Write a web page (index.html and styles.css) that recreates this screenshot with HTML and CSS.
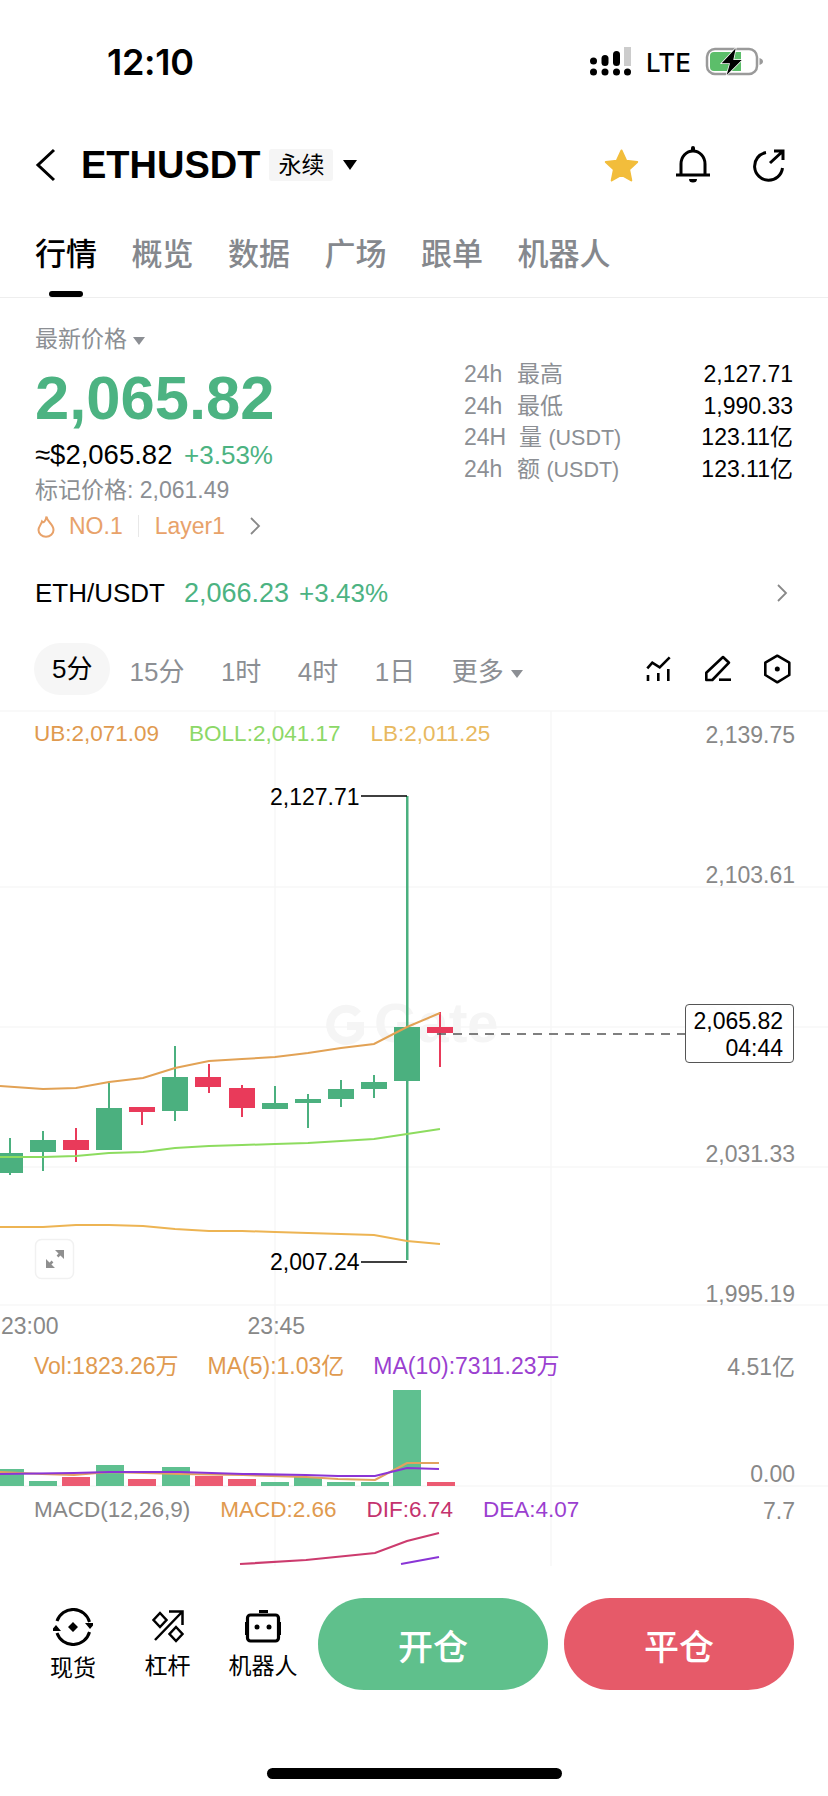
FILE: index.html
```html
<!DOCTYPE html>
<html lang="zh-CN">
<head>
  <meta charset="UTF-8" />
  <meta name="viewport" content="width=device-width, initial-scale=1.0"/>
  <title>ETHUSDT</title>
  <link rel="stylesheet" href="styles.css">
</head>
<body>
  <div class="screen">

    <div class="status">
      <span class="time">12:10</span>
      <div class="status-right">
        <svg class="signal" width="42" height="32" viewBox="590 46 42 32">
          <g fill="#000">
            <circle cx="593.5" cy="72" r="3.5"/><circle cx="605" cy="72" r="3.5"/><circle cx="616.5" cy="72" r="3.5"/><circle cx="627.5" cy="72" r="3.5"/>
            <circle cx="593.5" cy="61" r="3.5"/>
            <rect x="601.5" y="55" width="7" height="11" rx="3.5"/>
            <rect x="613" y="51" width="7" height="15" rx="3.5"/>
          </g>
          <rect x="624" y="47" width="7" height="19" fill="#ccc"/>
        </svg>
        <span class="lte">LTE</span>
        <svg class="battery" width="60" height="32" viewBox="704 46 60 32">
          <rect x="707" y="49" width="50" height="25" rx="8" fill="none" stroke="#9a9a9a" stroke-width="2.5"/>
          <path d="M710 56a4 4 0 0 1 4-4h27v19h-27a4 4 0 0 1-4-4z" fill="#5cbe6a"/>
          <path d="M759.5 58c2.500 1 3.500 2 3.500 3.500s-1 2.500-3.500 3.500z" fill="#9a9a9a"/>
          <path d="M735.700 48.300L721.700 63.300H730L726.700 75L741.700 60H733.300z" fill="#000" stroke="#fff" stroke-width="1.500" paint-order="stroke"/>
        </svg>
      </div>
    </div>

    <div class="nav">
      <svg width="22" height="34" viewBox="35 148 22 34"><path d="M54 150L38 165L54 180" fill="none" stroke="#000" stroke-width="3"/></svg>
      <span class="symbol">ETHUSDT</span>
      <span class="badge">永续</span>
      <span class="caret"></span>
      <div class="nav-icons">
        <svg width="40" height="36" viewBox="602 147 40 36"><path d="M621.500 150.500l4.700 10.200 11 1.300-8.100 7.500 2.200 11-9.800-5.500-9.800 5.500 2.200-11-8.100-7.500 11-1.300z" fill="#f2bd3b" stroke="#f2bd3b" stroke-width="2" stroke-linejoin="round"/></svg>
        <svg width="36" height="38" viewBox="675 146 36 38">
          <path d="M681 175V164a12 13 0 0 1 24 0V175M676 175H710" fill="none" stroke="#000" stroke-width="3"/>
          <path d="M689 179h8a4 3.500 0 0 1-8 0zM691 148a2 2 0 0 1 4 0v2h-4z" fill="#000"/>
        </svg>
        <svg class="share" width="36" height="34" viewBox="751 149 36 34">
          <path d="M766 153.500A14 14 0 1 0 782.500 169M770 164L782.500 152.500M774 152H783V161" fill="none" stroke="#000" stroke-width="3"/>
        </svg>
      </div>
    </div>

    <div class="tabs">
      <span class="tab active">行情</span>
      <span class="tab">概览</span>
      <span class="tab">数据</span>
      <span class="tab">广场</span>
      <span class="tab">跟单</span>
      <span class="tab">机器人</span>
    </div>

    <div class="info">
      <div class="info-left">
        <div class="muted latest">最新价格 <span class="caret small"></span></div>
        <div class="price">2,065.82</div>
        <div class="approx">≈$2,065.82 <span class="up">+3.53%</span></div>
        <div class="muted mark">标记价格: 2,061.49</div>
        <div class="tags">
          <svg width="18" height="23" viewBox="37 514 18 23"><path d="M46.500 515.500C47 521 53.500 523 53.500 529A7.500 6.800 0 0 1 38.500 529C38.500 525.500 41 524 42 520.500C43.500 522 45.500 521 46.500 515.500Z" fill="none" stroke="#e8a26a" stroke-width="2"/></svg>
          <span class="no1">NO.1</span>
          <span class="tag-sep"></span>
          <span>Layer1</span>
          <svg class="tag-arrow" width="12" height="20" viewBox="0 0 12 20"><path d="M2 2L10 10L2 18" fill="none" stroke="#888" stroke-width="1.800"/></svg>
        </div>
      </div>
      <div class="stats">
        <div class="stat"><span class="k">24h</span><span>最高</span><b>2,127.71</b></div>
        <div class="stat"><span class="k">24h</span><span>最低</span><b>1,990.33</b></div>
        <div class="stat"><span class="k">24H</span><span class="unit">量 <small>(USDT)</small></span><b>123.11亿</b></div>
        <div class="stat"><span class="k">24h</span><span>额 <small>(USDT)</small></span><b>123.11亿</b></div>
      </div>
    </div>

    <div class="spot">
      <span class="spot-name">ETH/USDT</span>
      <span class="up spot-price">2,066.23</span>
      <span class="up">+3.43%</span>
      <svg class="spot-arrow" width="12" height="20" viewBox="0 0 12 20"><path d="M2 2L10 10L2 18" fill="none" stroke="#888" stroke-width="1.800"/></svg>
    </div>

    <div class="periods">
      <span class="period active">5分</span>
      <span class="period">15分</span>
      <span class="period">1时</span>
      <span class="period">4时</span>
      <span class="period">1日</span>
      <span class="period">更多 <span class="caret small"></span></span>
      <div class="tools">
        <svg width="30" height="30" viewBox="645 654 30 30">
          <path d="M648.300 668.300L653.300 662.700L660.700 667.300L670.700 657.300M649 675V681M659.300 673V681M669.300 669V681" fill="none" stroke="#000" stroke-width="2.600"/>
        </svg>
        <svg width="30" height="30" viewBox="704 653 30 30">
          <path d="M707.300 671.700L724 656L730 661.700L713.300 679H707.300z" fill="none" stroke="#000" stroke-width="2.600" stroke-linejoin="round"/>
          <path d="M720 678.700H732" stroke="#000" stroke-width="2.600"/>
        </svg>
        <svg width="30" height="32" viewBox="762 653 30 32">
          <path d="M777.300 655.700L789.300 662.700V675L777.300 682.300L765.300 675V662.700z" fill="none" stroke="#000" stroke-width="2.600" stroke-linejoin="round"/>
          <circle cx="777.300" cy="669" r="2.500" fill="#000"/>
        </svg>
      </div>
    </div>

    <div class="chart">
      <svg class="plot" width="828" height="856" viewBox="0 710 828 856">
        <!-- grid -->
        <path d="M0 711H828M0 887H828M0 1027H828M0 1167H828M0 1305H828M0 1486H828M275 711V1566M551 711V1566" fill="none" stroke="#f7f7f7" stroke-width="1.500"/>

        <!-- watermark -->
        <path d="M358 1014A16 16 0 1 0 360 1033V1026H347" fill="none" stroke="#f5f5f5" stroke-width="8"/>
        <text x="374" y="1042" class="watermark">Gate</text>

        <!-- candles -->
        <g fill="#4bb07f" stroke="none">
          <rect x="9" y="1138" width="2" height="37"/><rect x="0" y="1153" width="23" height="20"/>
          <rect x="42" y="1131" width="2" height="40"/><rect x="30" y="1140" width="26" height="12"/>
          <rect x="108" y="1083" width="2" height="67"/><rect x="96" y="1108" width="26" height="42"/>
          <rect x="174" y="1046" width="2" height="75"/><rect x="162" y="1077" width="26" height="34"/>
          <rect x="274" y="1086" width="2" height="23"/><rect x="262" y="1103" width="26" height="6"/>
          <rect x="307" y="1094" width="2" height="34"/><rect x="295" y="1099" width="26" height="4"/>
          <rect x="340" y="1080" width="2" height="27"/><rect x="328" y="1089" width="26" height="10"/>
          <rect x="373" y="1075" width="2" height="23"/><rect x="361" y="1082" width="26" height="7"/>
          <rect x="406" y="796" width="2.500" height="464"/><rect x="394" y="1027" width="26" height="54"/>
        </g>
        <g fill="#e93a5a" stroke="none">
          <rect x="75" y="1128" width="2" height="34"/><rect x="63" y="1140" width="26" height="10"/>
          <rect x="141" y="1107" width="2" height="18"/><rect x="129" y="1107" width="26" height="5"/>
          <rect x="208" y="1064" width="2" height="29"/><rect x="195" y="1077" width="26" height="10"/>
          <rect x="241" y="1085" width="2" height="32"/><rect x="229" y="1088" width="26" height="20"/>
          <rect x="439" y="1012" width="2" height="55"/><rect x="427" y="1027" width="26" height="6"/>
        </g>

        <!-- boll -->
        <g fill="none" stroke-width="2">
          <polyline stroke="#e2a255" points="0,1086 43,1089 76,1088 109,1082 143,1078 175,1068 209,1061 242,1059 275,1057 308,1053 341,1048 374,1044 407,1027 440,1013"/>
          <polyline stroke="#8ddc5f" points="0,1157 43,1157 76,1156 109,1153 143,1152 175,1148 209,1146 242,1145 275,1144 308,1143 341,1141 374,1139 407,1134 440,1129"/>
          <polyline stroke="#edb453" points="0,1227 43,1227 76,1225 109,1225 143,1226 175,1229 209,1231 242,1231 275,1232 308,1233 341,1234 374,1235 407,1241 440,1244"/>
        </g>

        <!-- last price line -->
        <path d="M437 1034H685" stroke="#555" stroke-width="1.500" stroke-dasharray="9 7"/>

        <!-- high / low leaders -->
        <path d="M361 796H407M361 1262H407" stroke="#000" stroke-width="1.500"/>

        <!-- expand -->
        <rect x="35.500" y="1239.500" width="38" height="39" rx="6" fill="#fff" stroke="#f1f1f1" stroke-width="1.500"/>
        <path d="M64 1250V1259L55 1250zM46 1268V1259L55 1268z" fill="#8f8f8f"/>
        <path d="M48 1266L52.500 1261.500M57.500 1256.500L62 1252" stroke="#8f8f8f" stroke-width="2.500"/>

        <!-- volume -->
        <g fill="#5fc090">
          <rect x="0" y="1469" width="24" height="17"/><rect x="29" y="1481" width="28" height="5"/>
          <rect x="96" y="1465" width="28" height="21"/><rect x="162" y="1467" width="28" height="19"/>
          <rect x="261" y="1482" width="28" height="4"/><rect x="294" y="1477" width="28" height="9"/>
          <rect x="327" y="1482" width="28" height="4"/><rect x="361" y="1482" width="28" height="4"/>
          <rect x="393" y="1390" width="28" height="96"/>
        </g>
        <g fill="#ec5b72">
          <rect x="62" y="1477" width="28" height="9"/><rect x="128" y="1479" width="28" height="7"/>
          <rect x="195" y="1476" width="28" height="10"/><rect x="228" y="1479" width="28" height="7"/>
          <rect x="427" y="1482" width="28" height="4"/>
        </g>
        <g fill="none" stroke-width="2.200">
          <polyline stroke="#e2a25f" points="0,1472 42,1474 74,1475 109,1472 180,1474 243,1475 306,1477 338,1479 375,1480 407,1463 439,1463"/>
          <polyline stroke="#8a35d6" points="0,1474 74,1473 109,1472 180,1472 243,1474 306,1475 338,1476 375,1476 407,1468 439,1469"/>
        </g>

        <!-- macd -->
        <g fill="none" stroke-width="2.200">
          <polyline stroke="#cc3b6e" points="240,1564 306,1560 375,1553 407,1541 439,1533"/>
          <polyline stroke="#8a35d6" points="401,1564 439,1557"/>
        </g>
      </svg>

      <div class="pane pane-main">
        <div class="legend">
          <span class="c-ub">UB:2,071.09</span>
          <span class="c-boll">BOLL:2,041.17</span>
          <span class="c-lb">LB:2,011.25</span>
        </div>
        <div class="axis">
          <span>2,139.75</span>
          <span>2,103.61</span>
          <span class="axis-hidden">2,067.47</span>
          <span>2,031.33</span>
          <span>1,995.19</span>
        </div>
      </div>

      <div class="times">
        <span>23:00</span>
        <span>23:45</span>
      </div>

      <div class="pane pane-vol">
        <div class="legend">
          <span class="c-ub">Vol:1823.26万</span>
          <span class="c-ub">MA(5):1.03亿</span>
          <span class="c-purple">MA(10):7311.23万</span>
        </div>
        <div class="axis">
          <span>4.51亿</span>
          <span>0.00</span>
        </div>
      </div>

      <div class="pane pane-macd">
        <div class="legend">
          <span class="c-gray">MACD(12,26,9)</span>
          <span class="c-ub">MACD:2.66</span>
          <span class="c-pink">DIF:6.74</span>
          <span class="c-purple">DEA:4.07</span>
        </div>
        <div class="axis">
          <span>7.7</span>
        </div>
      </div>

      <span class="extreme high">2,127.71</span>
      <span class="extreme low">2,007.24</span>
      <div class="last-box">
        <span>2,065.82</span>
        <span>04:44</span>
      </div>
    </div>

    <div class="actions">
      <div class="action">
        <svg width="40" height="38" viewBox="53 1608 40 38">
          <path d="M57 1621A17 17 0 0 1 89.500 1622M57 1633A17 17 0 0 0 89.500 1632" fill="none" stroke="#000" stroke-width="3"/>
          <path d="M56 1625L61 1631H51zM90 1629L85 1623H95zM73 1622L78 1627L73 1632L68 1627z" fill="#000"/>
        </svg>
        <span>现货</span>
      </div>
      <div class="action">
        <svg width="34" height="36" viewBox="151 1609 34 36">
          <path d="M155 1641L182 1613M169 1612.500H182.500V1626M160 1614L166.500 1621L160 1628L153.500 1621zM176 1628L182.500 1635L176 1642L169.500 1635z" fill="none" stroke="#000" stroke-width="2.500"/>
        </svg>
        <span>杠杆</span>
      </div>
      <div class="action robot">
        <svg width="38" height="36" viewBox="244 1609 38 36">
          <rect x="247.500" y="1616" width="31" height="26" rx="3" fill="none" stroke="#000" stroke-width="3.200"/>
          <path d="M259 1611H268V1614H259zM245 1623H248V1636H245zM278 1623H281V1636H278z" fill="#000"/>
          <circle cx="257" cy="1628" r="2.500" fill="#000"/><circle cx="269" cy="1628" r="2.500" fill="#000"/>
        </svg>
        <span>机器人</span>
      </div>
      <button class="trade open">开仓</button>
      <button class="trade close">平仓</button>
    </div>

    <div class="home-bar"></div>
  </div>
</body>
</html>
```

FILE: styles.css
```css
* {
  box-sizing: border-box;
}

body {
  margin: 0;
  background: #fff;
  font-family: "Liberation Sans", "Noto Sans CJK SC", sans-serif;
  color: #000;
}

svg {
  display: block;
  flex: none;
}

.screen {
  width: 828px;
  height: 1796px;
  overflow: hidden;
  background: #fff;
}

.up {
  color: #4cb382;
}

.muted {
  color: #8c8f94;
}

.caret {
  display: inline-block;
  width: 0;
  height: 0;
  border-left: 7px solid transparent;
  border-right: 7px solid transparent;
  border-top: 10px solid #000;
}

.caret.small {
  border-left-width: 6px;
  border-right-width: 6px;
  border-top: 8px solid #8c8f94;
  vertical-align: middle;
}

/* status bar */
.status {
  height: 124px;
  display: flex;
  align-items: center;
  justify-content: space-between;
  padding: 0 64px 0 107px;
}

.time {
  font-family: "Inter", sans-serif;
  font-size: 36px;
  font-weight: 600;
  letter-spacing: -0.3px;
}

.status-right {
  display: flex;
  align-items: center;
}

.lte {
  font-family: "Inter", sans-serif;
  font-size: 26px;
  font-weight: 500;
  margin: 0 13px 0 14px;
}

/* title row */
.nav {
  height: 82px;
  display: flex;
  align-items: center;
  padding: 0 41px 0 35px;
}

.symbol {
  font-size: 38px;
  font-weight: 700;
  margin-left: 24px;
}

.badge {
  margin-left: 9px;
  padding: 0 9px;
  height: 32px;
  line-height: 32px;
  font-size: 23px;
  background: #f5f5f5;
  border-radius: 3px;
}

.nav .caret {
  margin-left: 10px;
}

.nav-icons {
  margin-left: auto;
  display: flex;
  align-items: center;
  gap: 33px;
}

.share {
  margin-left: 7px;
}

/* tabs */
.tabs {
  height: 92px;
  display: flex;
  gap: 34.5px;
  padding: 31px 0 0 35px;
  border-bottom: 1px solid #eee;
}

.tab {
  position: relative;
  font-size: 31px;
  line-height: 36px;
  height: 36px;
  color: #85888d;
  font-weight: 500;
}

.tab.active {
  color: #000;
}

.tab.active::after {
  content: "";
  position: absolute;
  left: 14px;
  right: 14px;
  top: 54px;
  height: 6px;
  border-radius: 3px;
  background: #000;
}

/* price block */
.info {
  display: flex;
  justify-content: space-between;
  padding: 26px 35px 0;
  height: 265px;
}

.latest {
  font-size: 23px;
  line-height: 30px;
}

.price {
  margin-top: 14px;
  font-size: 61.5px;
  line-height: 60px;
  font-weight: 700;
  color: #4cb382;
}

.approx {
  margin-top: 12px;
  font-size: 27.5px;
  line-height: 30px;
}

.approx .up {
  font-size: 26px;
  margin-left: 4px;
}

.mark {
  margin-top: 5px;
  font-size: 23px;
  line-height: 30px;
}

.tags {
  margin-top: 6px;
  height: 30px;
  display: flex;
  align-items: center;
  font-size: 23px;
  color: #e8a26a;
}

.tags svg:first-child {
  margin-left: 2px;
}

.no1 {
  margin-left: 14px;
}

.tag-sep {
  width: 1px;
  height: 22px;
  margin: 0 16px 0 15px;
  background: #e8e8e8;
}

.tag-arrow {
  margin-left: 24px;
}

.stats {
  width: 329px;
  margin-top: 35px;
}

.stat {
  display: flex;
  height: 31.600px;
  line-height: 31.600px;
  font-size: 23px;
  color: #8c8f94;
}

.stat .k {
  width: 53px;
}

.stat .unit {
  margin-left: 2px;
}

.stat small {
  font-size: 21.5px;
}

.stat b {
  margin-left: auto;
  font-weight: 400;
  color: #000;
}

/* spot row */
.spot {
  height: 60px;
  display: flex;
  align-items: center;
  padding: 0 40px 0 35px;
  font-size: 26px;
}

.spot-price {
  font-size: 27px;
  margin: 0 10px 0 19px;
}

.spot-arrow {
  margin-left: auto;
}

/* timeframes */
.periods {
  margin-top: 20px;
  height: 52px;
  display: flex;
  align-items: center;
  padding: 0 36px 0 34px;
  gap: 36.5px;
  font-size: 26px;
  color: #8c8f94;
}

.period.active {
  color: #000;
  background: #f6f6f6;
  height: 52px;
  line-height: 52px;
  padding: 0 18px;
  border-radius: 26px;
  margin-right: -17.5px;
}

.tools {
  margin-left: auto;
  display: flex;
  align-items: center;
  gap: 29px;
}

/* chart */
.chart {
  position: relative;
  margin-top: 15px;
  height: 856px;
}

.plot {
  position: absolute;
  left: 0;
  top: 0;
}

.watermark {
  font-family: "Liberation Sans", sans-serif;
  font-size: 56px;
  font-weight: 700;
  fill: #f5f5f5;
}

.pane {
  position: relative;
  display: flex;
  justify-content: space-between;
  font-size: 23px;
  line-height: 24px;
  padding-left: 34px;
}

.pane-main {
  height: 600px;
}

.pane-vol {
  height: 144px;
}

.pane-macd {
  height: 80px;
}

.legend {
  display: flex;
  gap: 30px;
  padding-top: 12px;
  height: 36px;
}

.pane-main .legend,
.pane-macd .legend {
  font-size: 22.5px;
}

.pane-vol .legend {
  gap: 29px;
}

.axis {
  display: flex;
  flex-direction: column;
  justify-content: space-between;
  align-items: flex-end;
  padding: 13px 33px 0 0;
  color: #888;
}

.axis-hidden {
  color: #e4e4e4;
}

.pane-main .axis {
  padding-bottom: 4px;
}

.times {
  height: 32px;
  line-height: 32px;
  display: flex;
  gap: 189px;
  padding-left: 1px;
  font-size: 23px;
  color: #888;
  position: relative;
}

.c-ub { color: #e09a4f; }
.c-boll { color: #8cd867; }
.c-lb { color: #e8b95f; }
.c-purple { color: #9b3fd0; }
.c-pink { color: #c4336e; }
.c-gray { color: #888; }

.extreme {
  position: absolute;
  left: 270px;
  font-size: 23px;
  line-height: 24px;
}

.extreme.high {
  top: 75px;
}

.extreme.low {
  top: 540px;
}

.last-box {
  position: absolute;
  left: 685px;
  top: 294px;
  width: 109px;
  height: 59px;
  padding: 3px 10px 0 0;
  display: flex;
  flex-direction: column;
  align-items: flex-end;
  font-size: 23px;
  line-height: 27px;
  background: rgba(255, 255, 255, 0.93);
  border: 1px solid #555;
  border-radius: 4px;
}

/* bottom actions */
.actions {
  margin-top: 32px;
  height: 92px;
  display: flex;
  align-items: flex-start;
  padding-left: 50px;
  font-size: 23px;
}

.action {
  display: flex;
  flex-direction: column;
  align-items: center;
  width: 46px;
  margin-right: 48.5px;
  padding-top: 10px;
}

.action span {
  margin-top: 7px;
  line-height: 30px;
  white-space: nowrap;
}

.action.robot {
  margin-right: 20px;
  margin-left: -11px;
  width: 70px;
}

.trade {
  width: 230px;
  height: 92px;
  border: none;
  border-radius: 46px;
  color: #fff;
  font-family: inherit;
  font-size: 35px;
  font-weight: 500;
}

.trade.open {
  background: #5fc08c;
  margin-right: 16px;
}

.trade.close {
  background: #e65a69;
}

.home-bar {
  width: 295px;
  height: 11px;
  margin: 78px 0 0 267px;
  background: #000;
  border-radius: 6px;
}
```
